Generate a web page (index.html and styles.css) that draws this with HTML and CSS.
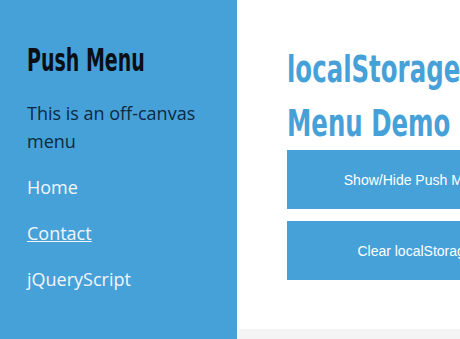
FILE: index.html
```html
<!DOCTYPE html>
<html lang="en">
<head>
    <meta charset="UTF-8">
    <meta name="viewport" content="width=device-width, initial-scale=1.0">
    <title>localStorage Push Menu Demo</title>
    <link rel="stylesheet" href="styles.css">
</head>
<body>
    <div class="page">
        <nav class="push-menu">
            <h2>Push Menu</h2>
            <p>This is an off-canvas menu</p>
            <ul>
                <li><a href="#">Home</a></li>
                <li><a href="#" class="current">Contact</a></li>
                <li><a href="#">jQueryScript</a></li>
            </ul>
        </nav>
        <div class="main">
            <div class="content">
                <h1>localStorage Push Menu Demo</h1>
                <button class="btn">Show/Hide Push Menu</button>
                <button class="btn">Clear localStorage</button>
            </div>
            <div class="footer"></div>
        </div>
    </div>
</body>
</html>
```

FILE: styles.css
```css
body {
    margin: 0;
    overflow: hidden;
    background-color: #ffffff;
    font-family: "Open Sans", sans-serif;
}
.page {
    display: flex;
    height: 339px;
}
.push-menu {
    flex: none;
    width: 237px;
    box-sizing: border-box;
    padding: 40px 27px 0;
    background-color: #47a1d9;
}
/* no Oswald offline: squeeze the condensed face to get its look */
.push-menu h2 {
    margin: 0 0 19px;
    width: 300px;
    font-family: "DejaVu Sans Condensed", sans-serif;
    font-size: 32px;
    font-weight: bold;
    line-height: 40px;
    color: #0b0f14;
    transform: scaleX(0.66);
    transform-origin: left top;
}
.push-menu p {
    margin: 0 0 18px;
    font-size: 18px;
    line-height: 28px;
    color: #0b2a40;
}
.push-menu ul {
    list-style: none;
    margin: 0;
    padding: 0;
}
.push-menu li {
    margin-bottom: 18px;
    font-size: 18px;
    line-height: 28px;
}
.push-menu a {
    color: #f2f6fa;
    text-decoration: none;
}
.push-menu a.current {
    text-decoration: underline;
}
.main {
    flex: none;
    width: 460px;
    display: flex;
    flex-direction: column;
}
.content {
    flex: 1;
    min-height: 0;
    overflow: hidden;
    padding: 42px 50px 0;
}
.content h1 {
    margin: 0;
    width: 410px;
    font-family: "DejaVu Sans Condensed", sans-serif;
    font-size: 38px;
    font-weight: bold;
    line-height: 54px;
    color: #47a1d9;
    transform: scaleX(0.715);
    transform-origin: left top;
}
.btn {
    display: block;
    width: 256px;
    height: 59px;
    margin-bottom: 12px;
    border: none;
    background-color: #47a1d9;
    color: #ffffff;
    font-family: "Liberation Sans", Arial, sans-serif;
    font-size: 14px;
}
.footer {
    height: 10px;
    margin-left: 2px;
    background-color: #f4f4f4;
}
```
